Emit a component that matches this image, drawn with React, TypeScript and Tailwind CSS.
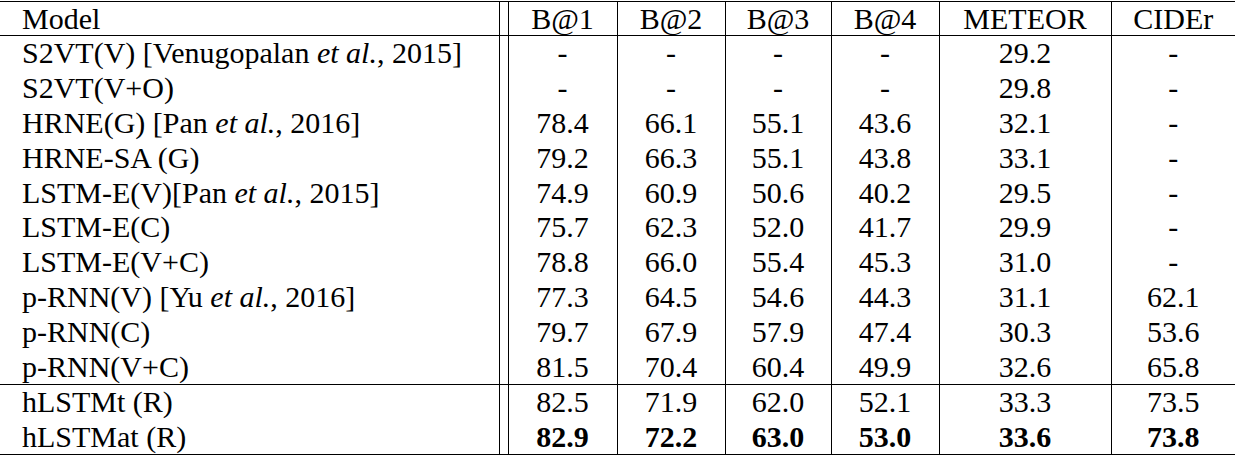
type Row = {
  model: React.ReactNode;
  values: string[];
  bold?: boolean;
  ruleAbove?: boolean;
};

const rows: Row[] = [
  {
    model: (
      <>
        S2VT(V) [Venugopalan <i>et al.</i>, 2015]
      </>
    ),
    values: ["-", "-", "-", "-", "29.2", "-"],
  },
  { model: "S2VT(V+O)", values: ["-", "-", "-", "-", "29.8", "-"] },
  {
    model: (
      <>
        HRNE(G) [Pan <i>et al.</i>, 2016]
      </>
    ),
    values: ["78.4", "66.1", "55.1", "43.6", "32.1", "-"],
  },
  { model: "HRNE-SA (G)", values: ["79.2", "66.3", "55.1", "43.8", "33.1", "-"] },
  {
    model: (
      <>
        LSTM-E(V)[Pan <i>et al.</i>, 2015]
      </>
    ),
    values: ["74.9", "60.9", "50.6", "40.2", "29.5", "-"],
  },
  { model: "LSTM-E(C)", values: ["75.7", "62.3", "52.0", "41.7", "29.9", "-"] },
  { model: "LSTM-E(V+C)", values: ["78.8", "66.0", "55.4", "45.3", "31.0", "-"] },
  {
    model: (
      <>
        p-RNN(V) [Yu <i>et al.</i>, 2016]
      </>
    ),
    values: ["77.3", "64.5", "54.6", "44.3", "31.1", "62.1"],
  },
  { model: "p-RNN(C)", values: ["79.7", "67.9", "57.9", "47.4", "30.3", "53.6"] },
  { model: "p-RNN(V+C)", values: ["81.5", "70.4", "60.4", "49.9", "32.6", "65.8"] },
  {
    model: "hLSTMt (R)",
    values: ["82.5", "71.9", "62.0", "52.1", "33.3", "73.5"],
    ruleAbove: true,
  },
  {
    model: "hLSTMat (R)",
    values: ["82.9", "72.2", "63.0", "53.0", "33.6", "73.8"],
    bold: true,
  },
];

const headers = ["B@1", "B@2", "B@3", "B@4", "METEOR", "CIDEr"];

export default function App() {
  return (
    <div className="min-h-[457px] w-[1239px] bg-white pt-px">
      <table className="w-[1235px] table-fixed border-collapse text-[30px] leading-none text-black [font-family:'Liberation_Serif',serif]">
        <colgroup>
          <col className="w-[499px]" />
          <col className="w-[9px]" />
          <col className="w-[109px]" />
          <col className="w-[108px]" />
          <col className="w-[106px]" />
          <col className="w-[108px]" />
          <col className="w-[172px]" />
          <col className="w-[124px]" />
        </colgroup>
        <thead>
          <tr className="h-[34px] border-y border-black">
            <th className="border-r border-black pl-[22px] text-left font-normal">Model</th>
            <th className="border-r border-black" />
            {headers.map((h) => (
              <th
                key={h}
                className="border-r border-black font-normal last:border-r-0"
              >
                {h}
              </th>
            ))}
          </tr>
        </thead>
        <tbody>
          {rows.map((row, i) => (
            <tr
              key={i}
              className={
                row.ruleAbove
                  ? "h-[35px] border-t border-black"
                  : i === rows.length - 1
                    ? "h-[35px] border-b border-black"
                    : "h-[34.9px]"
              }
            >
              <td className="whitespace-nowrap border-r border-black pl-[22px]">{row.model}</td>
              <td className="border-r border-black" />
              {row.values.map((v, j) => (
                <td
                  key={j}
                  className={
                    row.bold
                      ? "border-r border-black text-center font-bold last:border-r-0"
                      : "border-r border-black text-center last:border-r-0"
                  }
                >
                  {v}
                </td>
              ))}
            </tr>
          ))}
        </tbody>
      </table>
    </div>
  );
}
